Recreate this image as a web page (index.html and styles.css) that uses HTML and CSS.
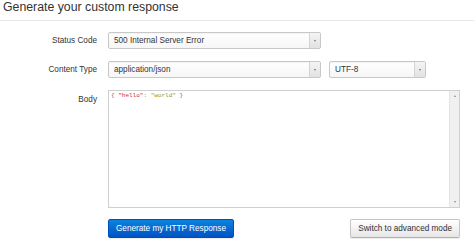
FILE: index.html
```html
<html>
  <head>
    <title>Custom response</title>
    <link rel="stylesheet" href="styles.css">
  </head>
  <body>
    <div id="main">
      <h1 class="title">Generate your custom response</h1>

      <div class="form">
        <div class="row">
          <div class="label">Status Code</div>
          <div class="select status">
            <span class="value">500 Internal Server Error</span>
            <span class="caret_box"><span class="caret"></span></span>
          </div>
        </div>

        <div class="row">
          <div class="label">Content Type</div>
          <div class="select status">
            <span class="value">application/json</span>
            <span class="caret_box"><span class="caret"></span></span>
          </div>
          <div class="select charset">
            <span class="value">UTF-8</span>
            <span class="caret_box"><span class="caret"></span></span>
          </div>
        </div>

        <div class="row top">
          <div class="label body_label">Body</div>
          <div class="editor">
            <div class="code"><span class="punct">{ </span><span class="key">"hello"</span><span class="punct">: </span><span class="str">"world"</span><span class="punct"> }</span></div>
            <div class="scrollbar">
              <span class="arrow up"></span>
              <span class="arrow down"></span>
            </div>
          </div>
        </div>

        <div class="actions">
          <div class="btn primary">Generate my HTTP Response</div>
          <div class="btn">Switch to advanced mode</div>
        </div>
      </div>
    </div>
  </body>
</html>
```

FILE: styles.css
```css
body {
  margin: 0;
  padding: 0;
  background-color: #fff;
  color: #333;
  font-family: "Liberation Sans", Arial, sans-serif;
  font-size: 8.2px;
}
div {
  display: flex;
  margin: 0;
  padding: 0;
}
#main {
  flex-direction: column;
  width: 100%;
}
.title {
  margin: 0;
  padding: 0 3px 5px 3px;
  font-size: 12.3px;
  font-weight: normal;
  line-height: 15px;
  color: #333;
  border-bottom: 1px solid #e8e8e8;
}
.form {
  flex-direction: column;
  width: 460px;
  padding-top: 11px;
  gap: 12px;
}
.row {
  flex-direction: row;
  align-items: center;
  gap: 8px;
}
.row.top {
  align-items: flex-start;
}
.label {
  width: 97px;
  margin-right: 3px;
  justify-content: flex-end;
  color: #333;
}
.body_label {
  padding-top: 4px;
  line-height: 11px;
}
.select {
  align-items: stretch;
  height: 15px;
  border: 1px solid #c8c8c8;
  border-radius: 2px;
  background: linear-gradient(#fff, #f6f6f6);
  box-shadow: inset 0 1px 1px rgba(0, 0, 0, 0.05);
}
.status {
  width: 211px;
}
.charset {
  width: 95px;
}
.value {
  display: flex;
  align-items: center;
  flex: 1 1 auto;
  padding-left: 5px;
  color: #333;
}
.caret_box {
  display: flex;
  align-items: center;
  justify-content: center;
  width: 10px;
  border-left: 1px solid #d4d4d4;
  background: linear-gradient(#f4f4f4, #e2e2e2);
}
.caret {
  width: 0;
  height: 0;
  border-left: 1.5px solid transparent;
  border-right: 1.5px solid transparent;
  border-top: 2px solid #777;
}
.editor {
  width: 350px;
  height: 116px;
  border: 1px solid #cfcfcf;
  background-color: #fff;
}
.code {
  flex: 1 1 auto;
  padding: 1px 2px;
  font-family: "Liberation Mono", "Courier New", monospace;
  font-size: 6px;
  line-height: 8px;
  white-space: pre;
  align-self: flex-start;
}
.punct {
  color: #666;
}
.key {
  color: #c8283c;
}
.str {
  color: #8c9a38;
}
.scrollbar {
  flex-direction: column;
  justify-content: space-between;
  align-items: center;
  width: 9px;
  padding: 4px 0 4px 0;
  border-left: 1px solid #e4e4e4;
  background-color: #f0f0f0;
}
.arrow {
  width: 0;
  height: 0;
  border-left: 1.5px solid transparent;
  border-right: 1.5px solid transparent;
}
.arrow.up {
  border-bottom: 2px solid #888;
}
.arrow.down {
  border-top: 2px solid #888;
}
.actions {
  flex-direction: row;
  justify-content: space-between;
  margin-left: 108px;
  margin-top: -1px;
}
.btn {
  align-items: center;
  height: 17px;
  padding: 0 7px;
  border: 1px solid #c4c4c4;
  border-bottom-color: #b0b0b0;
  border-radius: 2px;
  background: linear-gradient(#fff, #e6e6e6);
  box-shadow: 0 1px 1px rgba(0, 0, 0, 0.08);
  color: #333;
}
.btn.primary {
  padding: 0 7px 0 7px;
  border-color: #0050b8;
  background: linear-gradient(#0d82e0, #0052c4);
  color: #fff;
}
```
